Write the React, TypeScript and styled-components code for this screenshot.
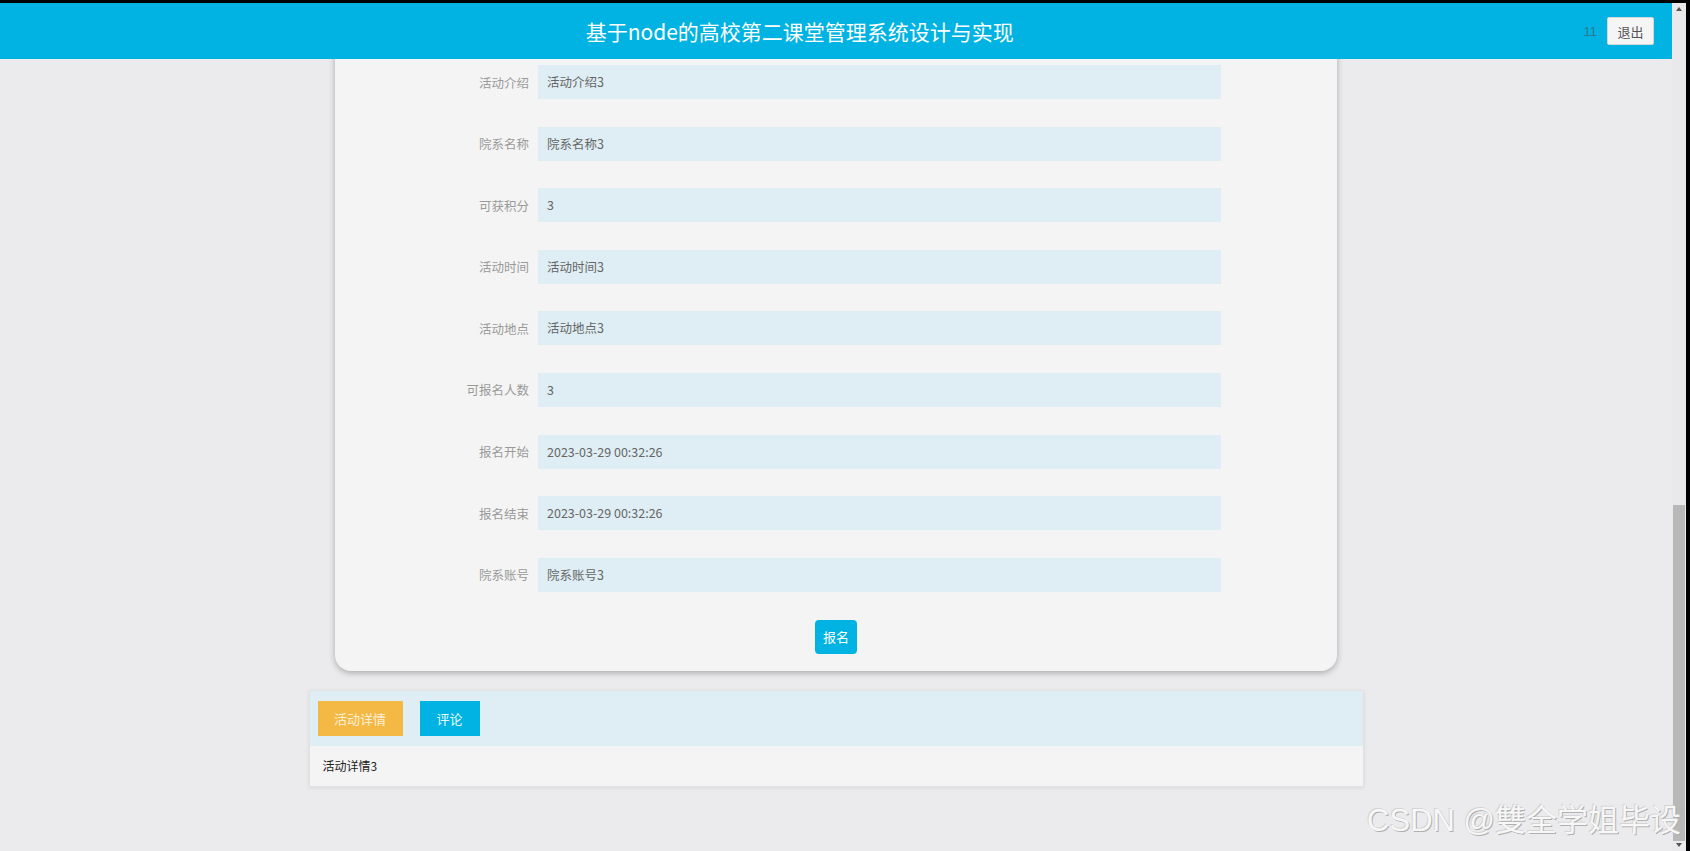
import React from 'react';
import styled, {createGlobalStyle} from 'styled-components';

const blue = '#00b3e2';
const orange = '#f4b844';
const fontFamily = `"Noto Sans CJK SC", "Noto Sans", sans-serif`;

const GlobalStyle = createGlobalStyle`
	html, body {
		margin: 0;
		padding: 0;
		height: 100%;
		overflow: hidden;
		background: #000;
	}
	body {
		font-family: ${fontFamily};
	}
	* {
		box-sizing: border-box;
	}
`;

const Screen = styled.div`
	position: relative;
	display: flex;
	flex-direction: column;
	height: 100vh;
	width: 100vw;
	background: #000;
`;

const TopEdge = styled.div`
	height: 3px;
	flex-shrink: 0;
`;

const WindowRow = styled.div`
	flex: 1;
	display: flex;
	min-height: 0;
	padding-right: 4px;
`;

const Viewport = styled.div`
	position: relative;
	flex: 1;
	overflow: hidden;
	background: #ebebed;
`;

const Header = styled.div`
	position: absolute;
	top: 0;
	left: 0;
	right: 0;
	z-index: 2;
	height: 56px;
	display: flex;
	align-items: center;
	background: ${blue};
`;

const Title = styled.div`
	flex: 1;
	text-align: center;
	padding-left: 16px;
	color: #fff;
	font-size: 21px;
	letter-spacing: 0;
`;

const Controls = styled.div`
	display: flex;
	align-items: center;
	gap: 10px;
	padding-right: 18px;
`;

const Counter = styled.span`
	font-family: "Liberation Sans", sans-serif;
	font-size: 13px;
	color: #2f7990;
`;

const LogoutButton = styled.button`
	width: 47px;
	height: 28px;
	padding: 0;
	border: 1px solid #d6d6d6;
	border-radius: 2px;
	background: #f5f5f5;
	color: #555;
	font-family: ${fontFamily};
	font-size: 13px;
`;

const Content = styled.div`
	display: flex;
	flex-direction: column;
	align-items: center;
	padding-top: 20px;
`;

const Card = styled.div`
	width: 1002px;
	padding: 42px 0 17px;
	background: #f4f4f4;
	border-radius: 16px;
	box-shadow: 0 2px 6px rgba(0, 0, 0, 0.28);
	display: flex;
	flex-direction: column;
	align-items: center;
`;

const Rows = styled.div`
	align-self: stretch;
	display: flex;
	flex-direction: column;
	gap: 27.6px;
`;

const Row = styled.div`
	display: flex;
	align-items: center;
	gap: 9px;
	padding-left: 74px;
`;

const Label = styled.div`
	width: 120px;
	text-align: right;
	font-size: 12.5px;
	color: #9a9a9a;
`;

const Value = styled.div`
	width: 683px;
	height: 34px;
	line-height: 34px;
	padding-left: 9px;
	background: #dfeef4;
	font-size: 12.5px;
	color: #666;
`;

const SubmitButton = styled.button`
	margin-top: 28px;
	width: 42px;
	height: 34px;
	padding: 0;
	border: none;
	border-radius: 4px;
	background: ${blue};
	color: #fff;
	font-family: ${fontFamily};
	font-size: 13px;
`;

const TabPanel = styled.div`
	margin-top: 19px;
	width: 1055px;
	border: 1px solid #e2e2e2;
	box-shadow: 0 1px 4px rgba(0, 0, 0, 0.08);
`;

const TabBar = styled.div`
	height: 55px;
	display: flex;
	align-items: center;
	gap: 17px;
	padding: 0 8px;
	background: #dfeef4;
`;

const Tab = styled.button<{$active?: boolean; $width: number}>`
	width: ${p => p.$width}px;
	height: 35px;
	padding: 0;
	border: none;
	background: ${p => (p.$active ? orange : blue)};
	color: ${p => (p.$active ? '#fdf0d6' : '#eafaff')};
	font-family: ${fontFamily};
	font-size: 13px;
`;

const TabBody = styled.div`
	height: 40px;
	display: flex;
	align-items: center;
	padding-left: 13px;
	background: #f4f4f4;
	font-size: 12px;
	color: #222;
`;

const Scrollbar = styled.div`
	position: relative;
	width: 14px;
	flex-shrink: 0;
	background: #e9e8ea;
`;

const Arrow = styled.div<{$down?: boolean}>`
	position: absolute;
	left: 4px;
	${p => (p.$down ? 'bottom: 4px;' : 'top: 4px;')}
	width: 0;
	height: 0;
	border-left: 3px solid transparent;
	border-right: 3px solid transparent;
	${p => (p.$down ? 'border-top: 4px solid #555;' : 'border-bottom: 4px solid #555;')}
`;

const Thumb = styled.div`
	position: absolute;
	left: 1px;
	right: 1px;
	top: 502px;
	bottom: 10px;
	background: #b8b8b8;
`;

const Watermark = styled.div`
	position: absolute;
	right: 9px;
	bottom: 15px;
	z-index: 3;
	font-family: "Liberation Sans", "Noto Sans CJK SC", sans-serif;
	font-size: 31px;
	line-height: 1;
	color: #f7f7f7;
	text-shadow: 1px 1px 0 #b0b0b0, -1px -1px 0 #d4d4d4;
	pointer-events: none;
`;

const fields: [string, string][] = [
	['活动介绍', '活动介绍3'],
	['院系名称', '院系名称3'],
	['可获积分', '3'],
	['活动时间', '活动时间3'],
	['活动地点', '活动地点3'],
	['可报名人数', '3'],
	['报名开始', '2023-03-29 00:32:26'],
	['报名结束', '2023-03-29 00:32:26'],
	['院系账号', '院系账号3'],
];

export default function App() {
	return (
		<Screen>
			<GlobalStyle />
			<TopEdge />
			<WindowRow>
				<Viewport>
					<Header>
						<Title>基于node的高校第二课堂管理系统设计与实现</Title>
						<Controls>
							<Counter>11</Counter>
							<LogoutButton>退出</LogoutButton>
						</Controls>
					</Header>
					<Content>
						<Card>
							<Rows>
								{fields.map(([label, value]) => (
									<Row key={label}>
										<Label>{label}</Label>
										<Value>{value}</Value>
									</Row>
								))}
							</Rows>
							<SubmitButton>报名</SubmitButton>
						</Card>
						<TabPanel>
							<TabBar>
								<Tab $active $width={85}>活动详情</Tab>
								<Tab $width={60}>评论</Tab>
							</TabBar>
							<TabBody>活动详情3</TabBody>
						</TabPanel>
					</Content>
				</Viewport>
				<Scrollbar>
					<Arrow />
					<Thumb />
					<Arrow $down />
				</Scrollbar>
			</WindowRow>
			<Watermark>CSDN @雙全学姐毕设</Watermark>
		</Screen>
	);
}
